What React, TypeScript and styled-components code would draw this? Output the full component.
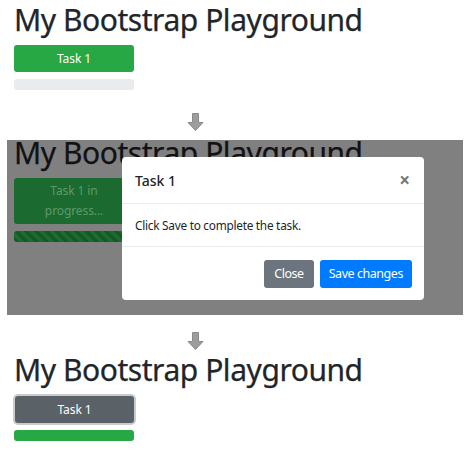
import React from "react";
import styled, { createGlobalStyle } from "styled-components";

const GlobalStyle = createGlobalStyle`
  html, body {
    margin: 0;
    padding: 0;
    background: #fff;
  }
  body {
    font-family: "Noto Sans", "Open Sans", sans-serif;
    color: #212529;
  }
`;

const Page = styled.div`
  width: 456px;
  padding: 0 0 0 7px;
`;

const Stage = styled.section`
  display: flex;
  flex-direction: column;
  align-items: flex-start;
  padding: 0 7px;
`;

interface TitleProps {
  $dim?: boolean;
}
const Title = styled.h1<TitleProps>`
  margin: ${(p) => (p.$dim ? "-7px 0 0" : "0")};
  font-size: 30px;
  font-weight: 400;
  line-height: 40px;
  letter-spacing: -0.45px;
  white-space: nowrap;
  color: ${(p) => (p.$dim ? "#111214" : "#212529")};
  -webkit-text-stroke: 0.25px ${(p) => (p.$dim ? "#111214" : "#212529")};
`;

type Tone = "success" | "pending" | "done";
interface TaskButtonProps {
  $tone: Tone;
}
const TaskButton = styled.button<TaskButtonProps>`
  width: 120px;
  min-height: 27px;
  margin-top: ${(p) => (p.$tone === "pending" ? "5px" : p.$tone === "done" ? "6px" : "5px")};
  padding: 3px 10px;
  border: none;
  border-radius: 3px;
  font-family: inherit;
  font-size: 12px;
  line-height: 20px;
  letter-spacing: -0.1px;
  color: ${(p) => (p.$tone === "pending" ? "#5e9a69" : "#fff")};
  background: ${(p) =>
    p.$tone === "success" ? "#28a745" : p.$tone === "pending" ? "#1b6a2f" : "#5a6268"};
  box-shadow: ${(p) => (p.$tone === "done" ? "0 0 0 2px #c8cbcf" : "none")};
  ${(p) => (p.$tone === "done" ? "width: 119px; margin-left: 1px;" : "")}
`;

interface ProgressProps {
  $fill: "empty" | "striped" | "full";
}
const Progress = styled.div<ProgressProps>`
  width: 120px;
  height: 11px;
  margin-top: 7px;
  border-radius: 3px;
  background-color: ${(p) =>
    p.$fill === "empty" ? "#e9ecef" : p.$fill === "striped" ? "#1c6b30" : "#28a745"};
  background-image: ${(p) =>
    p.$fill === "striped"
      ? "linear-gradient(45deg, rgba(0,0,0,.18) 25%, transparent 25%, transparent 50%, rgba(0,0,0,.18) 50%, rgba(0,0,0,.18) 75%, transparent 75%, transparent)"
      : "none"};
  background-size: 10px 10px;
`;

interface ArrowRowProps {
  $top: number;
  $bottom: number;
}
const ArrowRow = styled.div<ArrowRowProps>`
  display: flex;
  padding: ${(p) => `${p.$top}px 0 ${p.$bottom}px 180px`};
  line-height: 0;
`;

const Panel = styled.div`
  position: relative;
  height: 175px;
  background: #808080;
  overflow: hidden;
`;

const Modal = styled.div`
  position: absolute;
  left: 115px;
  top: 17px;
  width: 302px;
  height: 143px;
  background: #fff;
  border-radius: 4px;
  display: flex;
  flex-direction: column;
`;

const ModalHeader = styled.div`
  display: flex;
  align-items: center;
  justify-content: space-between;
  height: 47px;
  padding: 0 13px;
  border-bottom: 1px solid #e9ecef;
  box-sizing: border-box;
`;

const ModalTitle = styled.h5`
  margin: 0;
  font-size: 14px;
  font-weight: 500;
  color: #212529;
`;

const CloseX = styled.span`
  font-size: 19px;
  line-height: 1;
  color: #777;
  font-weight: 700;
  padding-right: 1px;
`;

const ModalBody = styled.div`
  height: 43px;
  display: flex;
  align-items: center;
  padding: 0 13px;
  font-size: 11.8px;
  letter-spacing: -0.25px;
  color: #212529;
  border-bottom: 1px solid #e9ecef;
  box-sizing: border-box;
`;

const ModalFooter = styled.div`
  flex: 1;
  display: flex;
  justify-content: flex-end;
  align-items: center;
  gap: 6px;
  padding: 0 12px 0 0;
`;

interface ActionProps {
  $primary?: boolean;
}
const Action = styled.button<ActionProps>`
  height: 28px;
  padding: 0 ${(p) => (p.$primary ? "9px" : "10px")};
  border: none;
  border-radius: 3px;
  font-family: inherit;
  font-size: 12.5px;
  letter-spacing: -0.45px;
  color: #fff;
  background: ${(p) => (p.$primary ? "#007bff" : "#6c757d")};
`;

const Arrow = () => (
  <svg width="17" height="18" viewBox="0 0 17 18">
    <path
      d="M5.5 0.5 H11.5 V9.5 H16 L8.5 17.5 L1 9.5 H5.5 Z"
      fill="#9d9d9d"
      stroke="#8a8a8a"
      strokeWidth="1"
    />
  </svg>
);

export default function App() {
  return (
    <Page>
      <GlobalStyle />
      <Stage>
        <Title>My Bootstrap Playground</Title>
        <TaskButton $tone="success">Task 1</TaskButton>
        <Progress $fill="empty" />
      </Stage>

      <ArrowRow $top={23} $bottom={9}>
        <Arrow />
      </ArrowRow>

      <Panel>
        <Stage>
          <Title $dim>My Bootstrap Playground</Title>
          <TaskButton $tone="pending">Task 1 in progress...</TaskButton>
          <Progress $fill="striped" />
        </Stage>
        <Modal>
          <ModalHeader>
            <ModalTitle>Task 1</ModalTitle>
            <CloseX>×</CloseX>
          </ModalHeader>
          <ModalBody>Click Save to complete the task.</ModalBody>
          <ModalFooter>
            <Action>Close</Action>
            <Action $primary>Save changes</Action>
          </ModalFooter>
        </Modal>
      </Panel>

      <ArrowRow $top={17} $bottom={0}>
        <Arrow />
      </ArrowRow>

      <Stage>
        <Title>My Bootstrap Playground</Title>
        <TaskButton $tone="done">Task 1</TaskButton>
        <Progress $fill="full" />
      </Stage>
    </Page>
  );
}
